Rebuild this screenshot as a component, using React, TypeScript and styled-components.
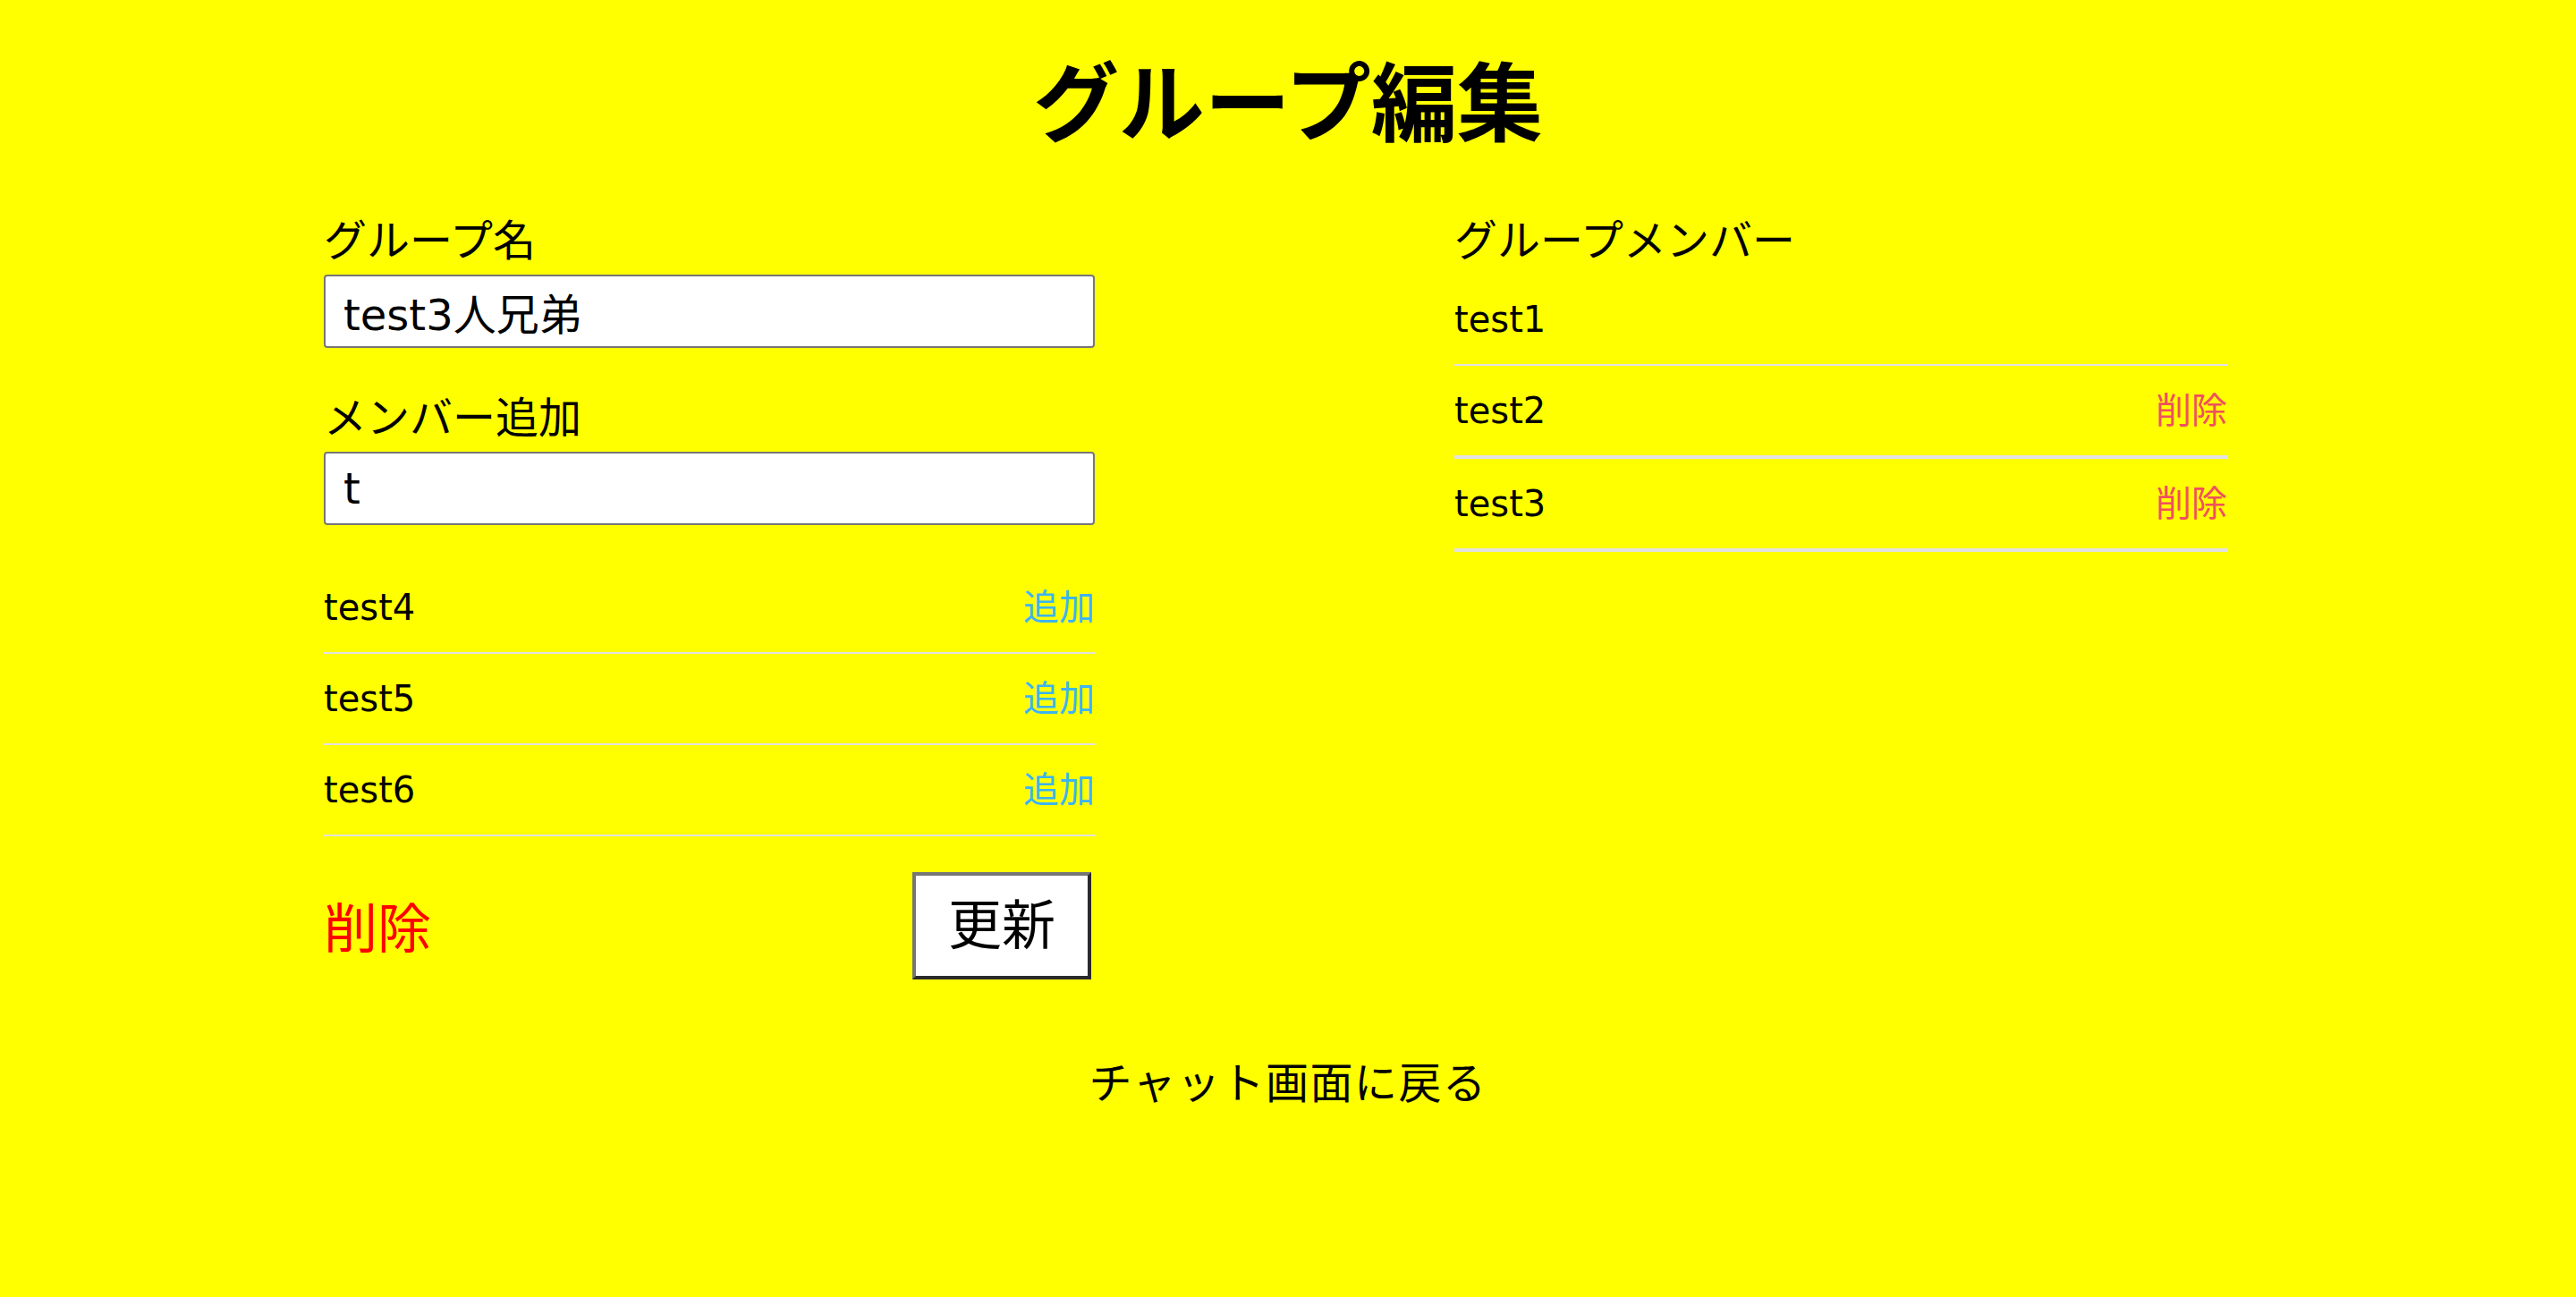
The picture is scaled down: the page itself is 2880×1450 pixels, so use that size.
import React from 'react';
import styled, { createGlobalStyle } from 'styled-components';

const GlobalStyle = createGlobalStyle`
  html, body {
    margin: 0;
    padding: 0;
    background: #ffff00;
  }
  body {
    font-family: "DejaVu Sans", "Noto Sans CJK JP", sans-serif;
    color: #000;
  }
`;

const Page = styled.div`
  width: 100%;
  min-height: 1450px;
  display: flex;
  flex-direction: column;
`;

const Title = styled.h1`
  margin: 0;
  padding-top: 45px;
  font-size: 96px;
  font-weight: 700;
  line-height: 1.5;
  text-align: center;
`;

const Columns = styled.div`
  display: grid;
  grid-template-columns: 862px 864px;
  column-gap: 402px;
  align-items: start;
  margin-top: 44px;
  padding-left: 362px;
`;

const Column = styled.section`
  display: flex;
  flex-direction: column;
`;

const Field = styled.div`
  display: flex;
  flex-direction: column;

  & + & {
    margin-top: 42px;
  }
`;

const Label = styled.label`
  display: block;
  margin-bottom: 2px;
  font-size: 48px;
  line-height: 1.5;
`;

const TextInput = styled.input`
  box-sizing: border-box;
  width: 100%;
  height: 82px;
  margin: 0;
  padding: 0 20px;
  border: 2px solid #767676;
  border-radius: 4px;
  background: #fff;
  font-family: inherit;
  font-size: 48px;
  color: #000;
  outline: none;
`;

const List = styled.ul<{ $offset: number }>`
  list-style: none;
  margin: ${props => props.$offset}px 0 0;
  padding: 0;
`;

const Row = styled.li<{ $border: number }>`
  display: flex;
  align-items: center;
  justify-content: space-between;
  height: 100px;
  border-bottom: ${props => props.$border}px solid #e2e2e2;
  font-size: 40px;
  line-height: 1.5;
`;

const RowAction = styled.span<{ $color: string }>`
  color: ${props => props.$color};
  cursor: pointer;
`;

const Actions = styled.div`
  display: flex;
  align-items: center;
  justify-content: space-between;
  margin-top: 40px;
  padding-right: 4px;
`;

const DeleteLink = styled.span`
  padding-top: 8px;
  font-size: 60px;
  line-height: 1.5;
  color: #ff0000;
  cursor: pointer;
`;

const UpdateButton = styled.button`
  box-sizing: border-box;
  width: 200px;
  height: 120px;
  padding: 11px 0;
  border-style: solid;
  border-width: 4px;
  border-color: #767676 #2a2a2a #2a2a2a #767676;
  background: #fff;
  font-family: inherit;
  font-size: 60px;
  line-height: 1.5;
  color: #000;
`;

const BackLink = styled.div`
  margin-top: 80px;
  font-size: 48px;
  line-height: 1.5;
  letter-spacing: 1.5px;
  text-align: center;
  cursor: pointer;
`;

const candidates = ['test4', 'test5', 'test6'];
const members = [
  { name: 'test1', removable: false },
  { name: 'test2', removable: true },
  { name: 'test3', removable: true },
];

export default function App() {
  return (
    <Page>
      <GlobalStyle />
      <Title>グループ編集</Title>
      <Columns>
        <Column>
          <Field>
            <Label>グループ名</Label>
            <TextInput defaultValue="test3人兄弟" />
          </Field>
          <Field>
            <Label>メンバー追加</Label>
            <TextInput defaultValue="t" />
          </Field>
          <List $offset={42}>
            {candidates.map(name => (
              <Row key={name} $border={2}>
                <span>{name}</span>
                <RowAction $color="#3bb4f2">追加</RowAction>
              </Row>
            ))}
          </List>
          <Actions>
            <DeleteLink>削除</DeleteLink>
            <UpdateButton>更新</UpdateButton>
          </Actions>
        </Column>
        <Column>
          <Label>グループメンバー</Label>
          <List $offset={0}>
            {members.map(m => (
              <Row key={m.name} $border={m.removable ? 4 : 2}>
                <span>{m.name}</span>
                {m.removable && <RowAction $color="#f0505e">削除</RowAction>}
              </Row>
            ))}
          </List>
        </Column>
      </Columns>
      <BackLink>チャット画面に戻る</BackLink>
    </Page>
  );
}
